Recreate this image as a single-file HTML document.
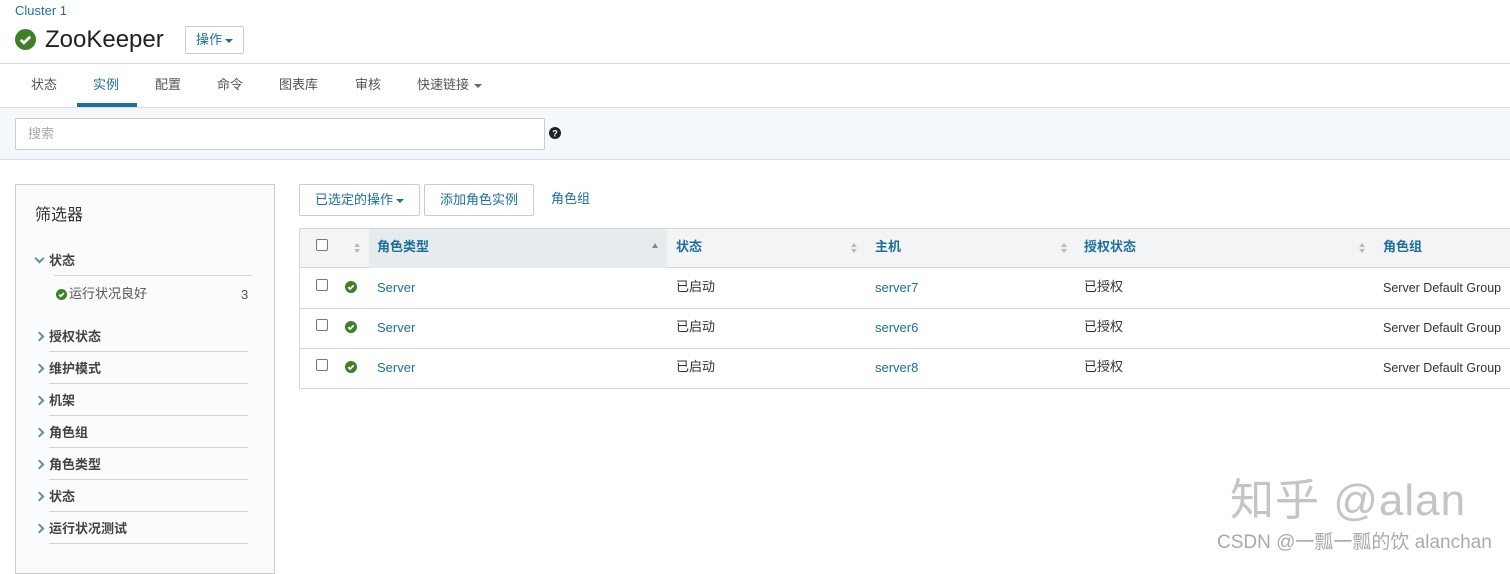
<!DOCTYPE html>
<html><head><meta charset="utf-8">
<style>
*{margin:0;padding:0;box-sizing:border-box}
body{width:1510px;height:562px;overflow:hidden;background:#fff;font-family:"Liberation Sans","Noto Sans CJK SC",sans-serif;color:#333;position:relative;font-size:13px;line-height:16px}
.a{position:absolute;white-space:nowrap;line-height:16px}
.caret{display:inline-block;width:0;height:0;border-left:4px solid transparent;border-right:4px solid transparent;border-top:4px solid currentColor;vertical-align:middle;margin-left:3px}
.btn{position:absolute;border:1px solid #ccc;background:#fff;border-radius:2px;color:#1f6e9c;font-size:13px;text-align:center}
.hl{position:absolute;height:1px;background:#d6d6d6}
.side .it{position:absolute;left:34px;font-weight:bold;font-size:13px;color:#444;line-height:16px}
.side .ln{position:absolute;left:33px;width:199px;height:1px;background:#d4d4d4}
.chev{display:inline-block;width:7px;height:7px;border-right:2.5px solid #5b8fb0;border-top:2.5px solid #5b8fb0;transform:rotate(45deg);margin-right:6px;vertical-align:1px}
.th{position:absolute;top:239px;font-weight:bold;color:#1f6e9c;font-size:13px;line-height:16px}
.cb{position:absolute;width:12px;height:12px;border:1px solid #777;border-radius:2px;background:#fff}
.srt{position:absolute;width:6px}
.srt:before{content:"";position:absolute;left:0;top:0;border-left:3px solid transparent;border-right:3px solid transparent;border-bottom:4px solid #bbb}
.srt:after{content:"";position:absolute;left:0;top:6px;border-left:3px solid transparent;border-right:3px solid transparent;border-top:4px solid #bbb}
.td{position:absolute;font-size:13px;color:#333;line-height:16px}
.blue{color:#1f6e9c}
.td.blue{color:#1f6e9c}
</style></head><body>
<div class="a blue" style="left:15px;top:3px;font-size:13px">Cluster 1</div>
<svg class="a" style="left:15px;top:29px" width="21" height="21" viewBox="0 0 20 20"><circle cx="10" cy="10" r="10" fill="#3f7f2a"/><path d="M5.5 10.3l3 3 6-6" stroke="#fff" stroke-width="2.6" fill="none"/></svg>
<div class="a" style="left:45px;top:27px;font-size:24px;line-height:26px;color:#222">ZooKeeper</div>
<div class="btn" style="left:185px;top:26px;width:59px;height:28px;line-height:26px">操作<span class="caret"></span></div>
<div class="hl" style="left:0;top:63px;width:1510px;background:#ddd"></div>
<div class="a" style="left:31px;top:77px;color:#555">状态</div>
<div class="a blue" style="left:93px;top:77px">实例</div>
<div class="a" style="left:77px;top:103px;width:60px;height:4px;background:#1f6e9c"></div>
<div class="a" style="left:155px;top:77px;color:#555">配置</div>
<div class="a" style="left:217px;top:77px;color:#555">命令</div>
<div class="a" style="left:279px;top:77px;color:#555">图表库</div>
<div class="a" style="left:355px;top:77px;color:#555">审核</div>
<div class="a" style="left:417px;top:77px;color:#555">快速链接<span class="caret" style="color:#666;margin-left:5px"></span></div>
<div class="a" style="left:0;top:107px;width:1510px;height:53px;background:#f4f8fb;border-top:1px solid #dde;border-bottom:1px solid #dde"></div>
<div class="a" style="left:15px;top:118px;width:530px;height:32px;background:#fff;border:1px solid #ccc;border-radius:2px;color:#aaa;padding:7px 12px">搜索</div>
<svg class="a" style="left:549px;top:127px" width="12" height="12" viewBox="0 0 12 12"><circle cx="6" cy="6" r="6" fill="#222"/><text x="6" y="9.5" font-size="9" font-weight="bold" fill="#fff" text-anchor="middle" font-family="Liberation Sans">?</text></svg>

<div class="side a" style="left:15px;top:184px;width:260px;height:390px;background:#fafbfc;border:1px solid #ccc">
<div class="a" style="left:19px;top:22px;font-size:16px;line-height:18px;color:#333">筛选器</div>
<div class="it" style="left:20px;top:68px"><span class="chev" style="transform:rotate(135deg);vertical-align:3px"></span>状态</div>
<div class="ln" style="left:38px;width:198px;top:90px"></div>
<svg class="a" style="left:40px;top:104px" width="11" height="11" viewBox="0 0 20 20"><circle cx="10" cy="10" r="10" fill="#3f7f2a"/><path d="M5.5 10.3l3 3 6-6" stroke="#fff" stroke-width="3" fill="none"/></svg>
<div class="a" style="left:53px;top:101px;color:#555">运行状况良好</div>
<div class="a" style="left:225px;top:102px;color:#555">3</div>
<div class="it" style="left:20px;top:144px"><span class="chev"></span>授权状态</div><div class="ln" style="top:166px"></div>
<div class="it" style="left:20px;top:176px"><span class="chev"></span>维护模式</div><div class="ln" style="top:198px"></div>
<div class="it" style="left:20px;top:208px"><span class="chev"></span>机架</div><div class="ln" style="top:230px"></div>
<div class="it" style="left:20px;top:240px"><span class="chev"></span>角色组</div><div class="ln" style="top:262px"></div>
<div class="it" style="left:20px;top:272px"><span class="chev"></span>角色类型</div><div class="ln" style="top:294px"></div>
<div class="it" style="left:20px;top:304px"><span class="chev"></span>状态</div><div class="ln" style="top:326px"></div>
<div class="it" style="left:20px;top:336px"><span class="chev"></span>运行状况测试</div><div class="ln" style="top:358px"></div>
</div>

<div class="btn" style="left:299px;top:184px;width:121px;height:32px;line-height:30px">已选定的操作<span class="caret"></span></div>
<div class="btn" style="left:424px;top:184px;width:110px;height:32px;line-height:30px">添加角色实例</div>
<div class="a blue" style="left:551px;top:191px">角色组</div>

<div class="a" style="left:299px;top:228px;width:1211px;height:161px;border:1px solid #d6d6d6;border-right:none"></div>
<div class="a" style="left:300px;top:229px;width:1210px;height:39px;background:#f2f4f6;border-bottom:1px solid #d6d6d6"></div>
<div class="a" style="left:369px;top:229px;width:298px;height:39px;background:#e8ebee"></div>
<div class="cb" style="left:316px;top:239px"></div>
<div class="srt" style="left:354px;top:243px"></div>
<div class="th" style="left:377px">角色类型</div>
<div class="a" style="left:652px;top:243px;border-left:3px solid transparent;border-right:3px solid transparent;border-bottom:5px solid #888"></div>
<div class="th" style="left:676px">状态</div><div class="srt" style="left:851px;top:243px"></div>
<div class="th" style="left:875px">主机</div><div class="srt" style="left:1061px;top:243px"></div>
<div class="th" style="left:1084px">授权状态</div><div class="srt" style="left:1359px;top:243px"></div>
<div class="th" style="left:1383px">角色组</div>

<div class="hl" style="left:300px;top:308px;width:1210px"></div>
<div class="hl" style="left:300px;top:348px;width:1210px"></div>

<div class="cb" style="left:316px;top:279px"></div>
<svg class="a" style="left:345px;top:281px" width="12" height="12" viewBox="0 0 20 20"><circle cx="10" cy="10" r="10" fill="#3f7f2a"/><path d="M5.5 10.3l3 3 6-6" stroke="#fff" stroke-width="3" fill="none"/></svg>
<div class="td blue" style="left:377px;top:280px">Server</div><div class="td" style="left:676px;top:279px">已启动</div><div class="td blue" style="left:875px;top:280px">server7</div><div class="td" style="left:1084px;top:279px">已授权</div><div class="td" style="left:1383px;top:280px;font-size:12.5px">Server Default Group</div>

<div class="cb" style="left:316px;top:319px"></div>
<svg class="a" style="left:345px;top:321px" width="12" height="12" viewBox="0 0 20 20"><circle cx="10" cy="10" r="10" fill="#3f7f2a"/><path d="M5.5 10.3l3 3 6-6" stroke="#fff" stroke-width="3" fill="none"/></svg>
<div class="td blue" style="left:377px;top:320px">Server</div><div class="td" style="left:676px;top:319px">已启动</div><div class="td blue" style="left:875px;top:320px">server6</div><div class="td" style="left:1084px;top:319px">已授权</div><div class="td" style="left:1383px;top:320px;font-size:12.5px">Server Default Group</div>

<div class="cb" style="left:316px;top:359px"></div>
<svg class="a" style="left:345px;top:361px" width="12" height="12" viewBox="0 0 20 20"><circle cx="10" cy="10" r="10" fill="#3f7f2a"/><path d="M5.5 10.3l3 3 6-6" stroke="#fff" stroke-width="3" fill="none"/></svg>
<div class="td blue" style="left:377px;top:360px">Server</div><div class="td" style="left:676px;top:359px">已启动</div><div class="td blue" style="left:875px;top:360px">server8</div><div class="td" style="left:1084px;top:359px">已授权</div><div class="td" style="left:1383px;top:360px;font-size:12.5px">Server Default Group</div>

<div class="a" style="left:1230px;top:476px;font-size:44px;line-height:50px;color:#c4c4c4;letter-spacing:1px">知乎 @alan</div>
<div class="a" style="left:1217px;top:532px;font-size:19px;line-height:22px;color:#aaa">CSDN @一瓢一瓢的饮 alanchan</div>
</body></html>
